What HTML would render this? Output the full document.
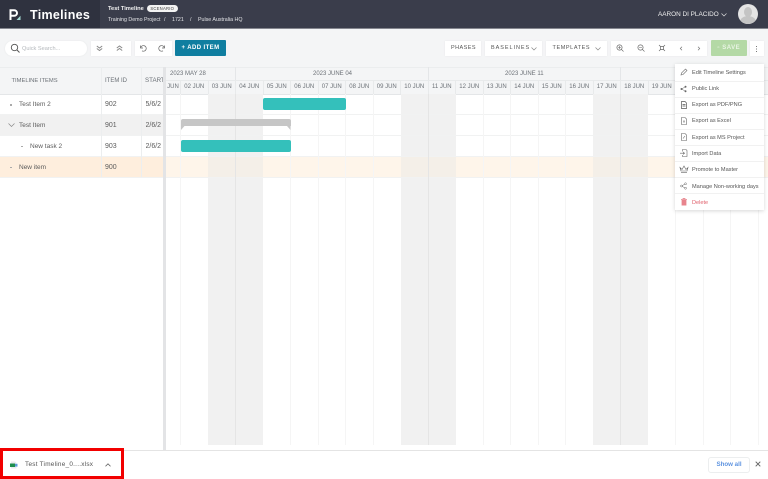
<!DOCTYPE html>
<html><head><meta charset="utf-8"><style>
html,body{margin:0;padding:0}
body{width:768px;height:479px;position:relative;overflow:hidden;background:#fff;font-family:"Liberation Sans",sans-serif;color:#555}
.a,.t{position:absolute}
.t{white-space:nowrap;line-height:12px}
.btn{position:absolute;background:#fff;top:41px;height:15px;box-shadow:0 0 2px rgba(0,0,0,.06)}
.bt{position:absolute;white-space:nowrap;font-size:5.500px;line-height:15px;color:#555;top:41px}
.day{position:absolute;top:80px;height:14px;line-height:14px;font-size:6px;color:#6b7076;width:27.500px;text-align:center;white-space:nowrap}
.vl{position:absolute;width:1px;top:94px;height:351px;background:#f5f5f5}
.vh{position:absolute;width:1px;top:80px;height:14px;background:#e8eaeb}
.vm{position:absolute;width:1px;top:94px;height:351px;background:#e5e5e5}
.hl{position:absolute;height:1px;background:#f1f2f2}
.wk{position:absolute;top:94px;height:351px;background:#f1f1f1}
.mi{position:absolute;left:692px;font-size:5.600px;color:#555;white-space:nowrap;line-height:10px}
.ms{position:absolute;left:675px;width:89px;height:1px;background:#f1f1f1}
.rt{font-size:6.500px;color:#5c5c5c}
.rn{font-size:7px;color:#5c5c5c}
svg{position:absolute;overflow:visible}
</style></head><body>

<!-- page background -->
<div class="a" style="left:0;top:29px;width:768px;height:38px;background:#f4f5f6"></div>

<!-- header -->
<div class="a" style="left:0;top:0;width:768px;height:29px;background:#3a3d4b;border-bottom:1px solid #85878f;box-sizing:border-box"></div>
<div class="a" style="left:0;top:0;width:100px;height:29px;background:#2f323f;border-bottom:1px solid #85878f;box-sizing:border-box"></div>
<svg style="left:9px;top:9px" width="13" height="13"><path d="M1.500 11V1.200H5.200A2.800 2.800 0 0 1 5.200 6.800H1.500" fill="none" stroke="#fff" stroke-width="2"/><path d="M7.500 11L11.500 6.800V11Z" fill="#a5dcd5"/></svg>
<div class="t" style="left:30px;top:8px;font-size:12.500px;line-height:14px;font-weight:bold;color:#fff;letter-spacing:.3px">Timelines</div>
<div class="t" style="left:108px;top:3px;font-size:5.700px;font-weight:bold;color:#f3f3f3">Test Timeline</div>
<div class="a" style="left:146.500px;top:5.300px;width:31.500px;height:6.700px;border-radius:4px;background:#f3f3f3"></div>
<div class="t" style="left:146.500px;top:2.700px;width:31.500px;text-align:center;font-size:4.200px;color:#444;letter-spacing:.25px">SCENARIO</div>
<div class="t" style="left:108px;top:13.500px;font-size:5.300px;color:#e2e3e6">Training Demo Project</div>
<div class="t" style="left:164px;top:13.500px;font-size:5.300px;color:#e2e3e6">/</div>
<div class="t" style="left:172px;top:13.500px;font-size:5.300px;color:#e2e3e6">1721</div>
<div class="t" style="left:190px;top:13.500px;font-size:5.300px;color:#e2e3e6">/</div>
<div class="t" style="left:198px;top:13.500px;font-size:5.300px;color:#e2e3e6">Pulse Australia HQ</div>
<div class="t" style="left:658px;top:9px;font-size:6.400px;color:#eee">AARON DI PLACIDO</div>
<svg style="left:721px;top:13px" width="6" height="4"><path d="M.5 .5L3 3L5.500 .5" fill="none" stroke="#ddd" stroke-width=".7"/></svg>
<div class="a" style="left:738px;top:4px;width:20px;height:20px;border-radius:50%;background:#e4e4e4;overflow:hidden">
<div class="a" style="left:6px;top:3px;width:8px;height:10px;border-radius:50%;background:#c4c4c4"></div>
<div class="a" style="left:2px;top:12px;width:16px;height:12px;border-radius:50%;background:#c4c4c4"></div></div>

<!-- toolbar -->
<div class="a" style="left:5px;top:41px;width:82px;height:15px;border-radius:8px;background:#fff;box-shadow:0 0 2px rgba(0,0,0,.06)"></div>
<svg style="left:10px;top:43px" width="10" height="10"><circle cx="4.500" cy="4.500" r="3.200" fill="none" stroke="#555" stroke-width=".9"/><path d="M7 7L9.500 9.500" stroke="#555" stroke-width="1"/></svg>
<div class="t" style="left:22px;top:42.500px;font-size:5.600px;color:#b4b8bc">Quick Search...</div>
<div class="btn" style="left:91px;width:40px"></div>
<svg style="left:95.500px;top:45px" width="7" height="7"><path d="M.8 1L3.500 3L6.200 1M.8 3.500L3.500 5.500L6.200 3.500" fill="none" stroke="#888" stroke-width="1"/></svg>
<svg style="left:115.500px;top:45px" width="7" height="7"><path d="M.8 3L3.500 1L6.200 3M.8 5.500L3.500 3.500L6.200 5.500" fill="none" stroke="#888" stroke-width="1"/></svg>
<div class="btn" style="left:135px;width:37px"></div>
<svg style="left:139px;top:44px" width="8" height="8"><path d="M1.500 1.500V4H4M1.700 3.800A2.800 2.800 0 1 1 3 6.800" fill="none" stroke="#666" stroke-width=".7"/></svg>
<svg style="left:158px;top:44px" width="8" height="8"><path d="M6.500 1.500V4H4M6.300 3.800A2.800 2.800 0 1 0 5 6.800" fill="none" stroke="#666" stroke-width=".7"/></svg>
<div class="a" style="left:175px;top:40px;width:51px;height:16px;background:#0f7ea0;border-radius:1px"></div>
<div class="t" style="left:175px;top:42px;width:51px;text-align:center;font-size:6px;font-weight:bold;color:#fff;letter-spacing:.4px">+ ADD ITEM</div>

<div class="btn" style="left:445px;width:36px"></div><div class="bt" style="left:451px;letter-spacing:.45px">PHASES</div>
<div class="btn" style="left:485px;width:57px"></div><div class="bt" style="left:491px;letter-spacing:.95px">BASELINES</div>
<svg style="left:531px;top:47px" width="6" height="4"><path d="M.5 .5L3 3L5.500 .5" fill="none" stroke="#888" stroke-width=".7"/></svg>
<div class="btn" style="left:546px;width:61px"></div><div class="bt" style="left:552.500px;letter-spacing:.6px">TEMPLATES</div>
<svg style="left:595px;top:47px" width="6" height="4"><path d="M.5 .5L3 3L5.500 .5" fill="none" stroke="#888" stroke-width=".7"/></svg>
<div class="btn" style="left:611px;width:96px"></div>
<svg style="left:616px;top:44px" width="8" height="8"><circle cx="3.500" cy="3.500" r="2.600" fill="none" stroke="#666" stroke-width=".7"/><path d="M5.500 5.500L7.500 7.500M2 3.500H5M3.500 2V5" stroke="#666" stroke-width=".6"/></svg>
<svg style="left:637px;top:44px" width="8" height="8"><circle cx="3.500" cy="3.500" r="2.600" fill="none" stroke="#666" stroke-width=".7"/><path d="M5.500 5.500L7.500 7.500M2 3.500H5" stroke="#666" stroke-width=".6"/></svg>
<svg style="left:658px;top:44px" width="8" height="8"><path d="M1 1L3 3M7 1L5 3M1 7L3 5M7 7L5 5M2.500 2.500H5.500V5.500H2.500Z" fill="none" stroke="#666" stroke-width=".7"/></svg>
<svg style="left:679px;top:46px" width="5" height="5"><path d="M3 .8L1.300 2.500L3 4.200" fill="none" stroke="#777" stroke-width=".7"/></svg>
<svg style="left:696px;top:46px" width="5" height="5"><path d="M2 .8L3.700 2.500L2 4.200" fill="none" stroke="#777" stroke-width=".7"/></svg>
<div class="a" style="left:711px;top:40px;width:35.500px;height:16px;background:#b4d9a6;border-radius:1px"></div>
<div class="t" style="left:711px;top:42px;width:35.500px;text-align:center;font-size:6px;font-weight:bold;color:#e9f4e4;letter-spacing:.5px">▫ SAVE</div>
<div class="btn" style="left:750px;width:14px"></div>
<div class="a" style="left:755.800px;top:45.500px;width:1.200px;height:1.200px;background:#777;box-shadow:0 2.500px 0 #777,0 5px 0 #777"></div>

<!-- table header -->
<div class="a" style="left:0;top:67px;width:768px;height:27px;background:#f4f5f6;border-top:1px solid #ebedee;box-sizing:border-box"></div>
<div class="a" style="left:0;top:93.500px;width:768px;height:1px;background:#e4e6e8"></div>
<div class="t" style="left:11.500px;top:74.500px;font-size:5.800px;color:#6b7076">TIMELINE ITEMS</div>
<div class="t" style="left:105px;top:74.500px;font-size:6px;color:#6b7076">ITEM ID</div>
<div class="t" style="left:145px;top:74.500px;font-size:6.200px;color:#6b7076;width:18px;overflow:hidden">START</div>

<!-- weekend shading -->
<div class="wk" style="left:208px;width:55px"></div>
<div class="wk" style="left:400.500px;width:55px"></div>
<div class="wk" style="left:593px;width:55px"></div>

<!-- rows -->
<div class="a" style="left:0;top:114.500px;width:163px;height:21px;background:#f1f1f1"></div>
<div class="a" style="left:0;top:156.500px;width:768px;height:21px;background:#fef5ea"></div>
<div class="a" style="left:208px;top:156.500px;width:55px;height:21px;background:#f4efe8"></div>
<div class="a" style="left:400.500px;top:156.500px;width:55px;height:21px;background:#f4efe8"></div>
<div class="a" style="left:593px;top:156.500px;width:55px;height:21px;background:#f4efe8"></div>
<div class="a" style="left:0;top:156.500px;width:163px;height:21px;background:#feeedd"></div>
<div class="hl" style="left:0;top:114px;width:768px"></div>
<div class="hl" style="left:0;top:135px;width:768px"></div>
<div class="hl" style="left:0;top:156px;width:768px"></div>
<div class="hl" style="left:0;top:177px;width:768px"></div>
<div class="a" style="left:101px;top:67px;width:1px;height:110px;background:#eceeef"></div>
<div class="a" style="left:141px;top:67px;width:1px;height:110px;background:#eceeef"></div>

<!-- grid lines -->
<div class="vl" style="left:180px"></div><div class="vm" style="left:235px"></div><div class="vl" style="left:290px"></div><div class="vl" style="left:317.500px"></div><div class="vl" style="left:345px"></div><div class="vl" style="left:372.500px"></div><div class="vm" style="left:427.500px"></div><div class="vl" style="left:482.500px"></div><div class="vl" style="left:510px"></div><div class="vl" style="left:537.500px"></div><div class="vl" style="left:565px"></div><div class="vm" style="left:620px"></div><div class="vl" style="left:675px"></div><div class="vl" style="left:702.500px"></div><div class="vl" style="left:730px"></div><div class="vl" style="left:757.500px"></div>
<div class="vh" style="left:180px"></div><div class="vh" style="left:207.500px"></div><div class="vh" style="left:235px"></div><div class="vh" style="left:262.500px"></div><div class="vh" style="left:290px"></div><div class="vh" style="left:317.500px"></div><div class="vh" style="left:345px"></div><div class="vh" style="left:372.500px"></div><div class="vh" style="left:400px"></div><div class="vh" style="left:427.500px"></div><div class="vh" style="left:455px"></div><div class="vh" style="left:482.500px"></div><div class="vh" style="left:510px"></div><div class="vh" style="left:537.500px"></div><div class="vh" style="left:565px"></div><div class="vh" style="left:592.500px"></div><div class="vh" style="left:620px"></div><div class="vh" style="left:647.500px"></div><div class="vh" style="left:675px"></div>
<div class="hl" style="left:166px;top:80px;width:602px;background:#e8eaeb"></div>
<div class="a" style="left:235px;top:67px;width:1px;height:13px;background:#e4e6e8"></div>
<div class="a" style="left:427.500px;top:67px;width:1px;height:13px;background:#e4e6e8"></div>
<div class="a" style="left:619.500px;top:67px;width:1px;height:13px;background:#e4e6e8"></div>

<!-- months -->
<div class="t" style="left:170px;top:67.500px;font-size:6px;color:#6b7076">2023 MAY 28</div>
<div class="t" style="left:313px;top:67.500px;font-size:6px;color:#6b7076">2023 JUNE 04</div>
<div class="t" style="left:505px;top:67.500px;font-size:6px;color:#6b7076">2023 JUNE 11</div>

<!-- days -->
<div class="day" style="left:166px;width:14px;overflow:hidden;direction:rtl">JUN</div>
<div class="day" style="left:180.500px">02 JUN</div><div class="day" style="left:208px">03 JUN</div><div class="day" style="left:235.500px">04 JUN</div><div class="day" style="left:263px">05 JUN</div><div class="day" style="left:290.500px">06 JUN</div><div class="day" style="left:318px">07 JUN</div><div class="day" style="left:345.500px">08 JUN</div><div class="day" style="left:373px">09 JUN</div><div class="day" style="left:400.500px">10 JUN</div><div class="day" style="left:428px">11 JUN</div><div class="day" style="left:455.500px">12 JUN</div><div class="day" style="left:483px">13 JUN</div><div class="day" style="left:510.500px">14 JUN</div><div class="day" style="left:538px">15 JUN</div><div class="day" style="left:565.500px">16 JUN</div><div class="day" style="left:593px">17 JUN</div><div class="day" style="left:620.500px">18 JUN</div><div class="day" style="left:648px">19 JUN</div>

<!-- divider -->
<div class="a" style="left:163px;top:67px;width:3px;height:383px;background:#e3e4e6"></div>

<!-- row text -->
<div class="a" style="left:10px;top:104px;width:1.500px;height:1.500px;background:#aaa"></div>
<div class="t rt" style="left:19px;top:99.300px">Test Item 2</div>
<div class="t rn" style="left:105px;top:99.300px">902</div>
<div class="t rn" style="left:145.500px;top:99.300px;width:18px;overflow:hidden">5/6/2</div>
<svg style="left:8px;top:123px" width="7" height="5"><path d="M.5 .5L3.500 3.500L6.500 .5" fill="none" stroke="#888" stroke-width=".7"/></svg>
<div class="t rt" style="left:19px;top:120.300px">Test Item</div>
<div class="t rn" style="left:105px;top:120.300px">901</div>
<div class="t rn" style="left:145.500px;top:120.300px;width:18px;overflow:hidden">2/6/2</div>
<div class="a" style="left:21px;top:145.500px;width:1.500px;height:1.500px;background:#aaa"></div>
<div class="t rt" style="left:30px;top:141px">New task 2</div>
<div class="t rn" style="left:105px;top:141px">903</div>
<div class="t rn" style="left:145.500px;top:141px;width:18px;overflow:hidden">2/6/2</div>
<div class="a" style="left:10px;top:166.500px;width:1.500px;height:1.500px;background:#aaa"></div>
<div class="t rt" style="left:19px;top:161.700px">New item</div>
<div class="t rn" style="left:105px;top:161.700px">900</div>

<!-- bars -->
<div class="a" style="left:263px;top:98px;width:82.500px;height:12px;background:#34c0bb;border-radius:2px"></div>
<div class="a" style="left:181px;top:119px;width:109.500px;height:7px;background:#c6c6c6;border-radius:2px 2px 0 0"></div>
<svg style="left:181px;top:126px" width="110" height="4"><path d="M0 0V4L3.500 0ZM109.500 0V4L106 0Z" fill="#c6c6c6"/></svg>
<div class="a" style="left:181px;top:140px;width:109.500px;height:12px;background:#34c0bb;border-radius:2px"></div>

<!-- dropdown menu -->
<div class="a" style="left:675px;top:64px;width:89px;height:146px;background:#fff;box-shadow:0 1px 4px rgba(0,0,0,.16)"></div>
<div class="ms" style="top:80.500px"></div><div class="ms" style="top:96.500px"></div><div class="ms" style="top:113px"></div><div class="ms" style="top:129px"></div><div class="ms" style="top:145px"></div><div class="ms" style="top:161px"></div><div class="ms" style="top:177px"></div><div class="ms" style="top:193px"></div>
<svg style="left:680px;top:68px" width="8" height="8"><path d="M1 7L1.500 5L5.500 1L7 2.500L3 6.500Z" fill="none" stroke="#666" stroke-width=".6"/></svg>
<svg style="left:680px;top:84.500px" width="8" height="8"><circle cx="1.500" cy="4" r="1" fill="#666"/><circle cx="5.500" cy="1.800" r="1" fill="#666"/><circle cx="5.500" cy="6.200" r="1" fill="#666"/><path d="M1.500 4L5.500 1.800M1.500 4L5.500 6.200" stroke="#666" stroke-width=".5"/></svg>
<svg style="left:680px;top:100.500px" width="8" height="8"><path d="M1.500 .5H5L6.500 2V7.500H1.500Z" fill="none" stroke="#555" stroke-width=".7"/><path d="M2.500 3.500H5.500M2.500 5H5.500" stroke="#555" stroke-width=".8"/></svg>
<svg style="left:680px;top:116.500px" width="8" height="8"><path d="M1.500 .5H5L6.500 2V7.500H1.500Z" fill="none" stroke="#666" stroke-width=".6"/><path d="M3 3.500L5 5.500M5 3.500L3 5.500" stroke="#666" stroke-width=".5"/></svg>
<svg style="left:680px;top:132.500px" width="8" height="8"><path d="M1.500 .5H5L6.500 2V7.500H1.500Z" fill="none" stroke="#666" stroke-width=".6"/><path d="M3 5.500L5 3" stroke="#666" stroke-width=".6"/></svg>
<svg style="left:680px;top:149px" width="8" height="8"><path d="M2.500 2.500V.5H6L7 1.500V7.500H2.500V6M0 4.200H4.500M3.200 3L4.500 4.200L3.200 5.400" fill="none" stroke="#666" stroke-width=".6"/></svg>
<svg style="left:679px;top:165px" width="10" height="8"><path d="M1 2.500L3 4.500L5 1L7 4.500L9 2.500L8 6H2ZM2 7.300H8" fill="none" stroke="#666" stroke-width=".6"/></svg>
<svg style="left:680px;top:182px" width="8" height="8"><circle cx="1.500" cy="4" r="1" fill="none" stroke="#666" stroke-width=".5"/><circle cx="5.500" cy="1.800" r="1" fill="none" stroke="#666" stroke-width=".5"/><circle cx="5.500" cy="6.200" r="1" fill="none" stroke="#666" stroke-width=".5"/><path d="M2.400 3.500L4.600 2.300M2.400 4.500L4.600 5.700" stroke="#666" stroke-width=".5"/></svg>
<svg style="left:680px;top:198px" width="8" height="8"><path d="M1 1.300H7M3 1.300V.4H5V1.300" fill="none" stroke="#e0636f" stroke-width=".6"/><path d="M1.600 2H6.400V7.500H1.600Z" fill="#e8848d"/></svg>
<div class="mi" style="top:67.500px">Edit Timeline Settings</div>
<div class="mi" style="top:84px">Public Link</div>
<div class="mi" style="top:100px">Export as PDF/PNG</div>
<div class="mi" style="top:116px">Export as Excel</div>
<div class="mi" style="top:132.500px">Export as MS Project</div>
<div class="mi" style="top:149px">Import Data</div>
<div class="mi" style="top:165px">Promote to Master</div>
<div class="mi" style="top:181.500px">Manage Non-working days</div>
<div class="mi" style="top:197.500px;color:#e0606c">Delete</div>

<!-- download bar -->
<div class="a" style="left:0;top:450px;width:768px;height:29px;background:#fff;border-top:1px solid #e4e4e4;box-sizing:border-box"></div>
<svg style="left:10px;top:461px" width="8" height="8"><path d="M1 .5H5L6.500 2V7.500H1Z" fill="#e8eaed"/><rect x="0" y="2.500" width="5" height="3.500" fill="#1e8e4e"/><rect x="5" y="2.800" width="2.500" height="2.800" fill="#5d9ad6"/></svg>
<div class="t" style="left:25px;top:459.300px;font-size:6.400px;color:#555;letter-spacing:.25px">Test Timeline_0....xlsx</div>
<svg style="left:105px;top:463px" width="6" height="4"><path d="M.5 3.300L3 .8L5.500 3.300" fill="none" stroke="#666" stroke-width=".8"/></svg>
<div class="a" style="left:0;top:448.300px;width:123.500px;height:30.700px;border:3.300px solid #f20000;box-sizing:border-box"></div>
<div class="a" style="left:708px;top:456.500px;width:42px;height:16px;background:#fff;border:1px solid #eceeef;border-radius:3px;box-sizing:border-box"></div>
<div class="t" style="left:708px;top:458.500px;width:42px;text-align:center;font-size:6.200px;font-weight:bold;color:#5d93e0">Show all</div>
<svg style="left:755px;top:461px" width="6" height="6"><path d="M.7 .7L5.300 5.300M5.300 .7L.7 5.300" stroke="#666" stroke-width="1"/></svg>
</body></html>
